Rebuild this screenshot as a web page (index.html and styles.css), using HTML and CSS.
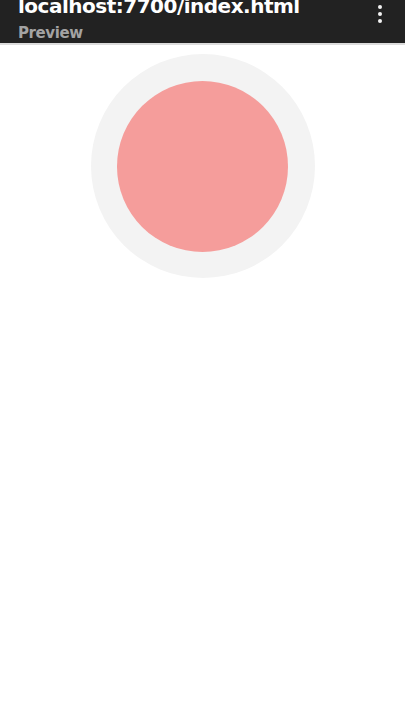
FILE: index.html
```html
<!DOCTYPE html>
<html lang="en">
<head>
<meta charset="utf-8">
<title>Preview</title>
<link rel="stylesheet" href="styles.css">
</head>
<body>
<header class="appbar">
  <div class="titles">
    <div class="url">localhost:7700/index.html</div>
    <div class="sub">Preview</div>
  </div>
  <div class="menu" aria-label="More options">
    <span class="dot"></span><span class="dot"></span><span class="dot"></span>
  </div>
</header>
<main class="stage">
  <div class="ring">
    <div class="disc"></div>
  </div>
</main>
</body>
</html>
```
FILE: styles.css
```css
html, body {
  margin: 0;
  padding: 0;
  background: #ffffff;
  width: 405px;
  height: 720px;
  overflow: hidden;
}
body {
  font-family: "DejaVu Sans", "Liberation Sans", sans-serif;
}
.appbar {
  height: 43px;
  background: #222222;
  border-bottom: 2px solid #dcdcdc;
  display: flex;
  justify-content: space-between;
  align-items: flex-start;
  padding: 0 23px 0 18px;
  overflow: hidden;
}
.titles {
  display: flex;
  flex-direction: column;
}
.url {
  color: #ffffff;
  font-weight: bold;
  font-size: 20px;
  line-height: 20px;
  margin-top: -4px;
  letter-spacing: -0.5px;
  white-space: nowrap;
}
.sub {
  color: #a3a3a3;
  font-weight: bold;
  font-size: 15px;
  line-height: 18px;
  margin-top: 8px;
  letter-spacing: -0.4px;
}
.menu {
  display: flex;
  flex-direction: column;
  gap: 3px;
  padding-top: 5px;
}
.dot {
  width: 4px;
  height: 4px;
  border-radius: 50%;
  background: #f2f2f2;
}
.stage {
  display: flex;
  justify-content: center;
  padding-top: 9px;
}
.ring {
  width: 224px;
  height: 224px;
  border-radius: 50%;
  background: #f3f3f3;
  display: flex;
  align-items: center;
  justify-content: center;
}
.disc {
  width: 171px;
  height: 171px;
  border-radius: 50%;
  background: #f59d9b;
}
```
